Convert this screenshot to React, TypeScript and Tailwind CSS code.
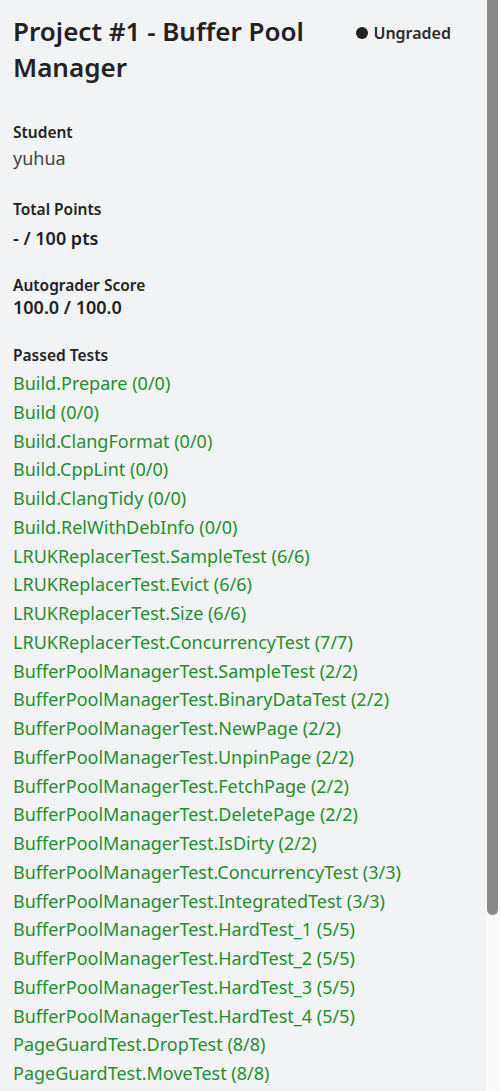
const tests = [
  'Build.Prepare (0/0)',
  'Build (0/0)',
  'Build.ClangFormat (0/0)',
  'Build.CppLint (0/0)',
  'Build.ClangTidy (0/0)',
  'Build.RelWithDebInfo (0/0)',
  'LRUKReplacerTest.SampleTest (6/6)',
  'LRUKReplacerTest.Evict (6/6)',
  'LRUKReplacerTest.Size (6/6)',
  'LRUKReplacerTest.ConcurrencyTest (7/7)',
  'BufferPoolManagerTest.SampleTest (2/2)',
  'BufferPoolManagerTest.BinaryDataTest (2/2)',
  'BufferPoolManagerTest.NewPage (2/2)',
  'BufferPoolManagerTest.UnpinPage (2/2)',
  'BufferPoolManagerTest.FetchPage (2/2)',
  'BufferPoolManagerTest.DeletePage (2/2)',
  'BufferPoolManagerTest.IsDirty (2/2)',
  'BufferPoolManagerTest.ConcurrencyTest (3/3)',
  'BufferPoolManagerTest.IntegratedTest (3/3)',
  'BufferPoolManagerTest.HardTest_1 (5/5)',
  'BufferPoolManagerTest.HardTest_2 (5/5)',
  'BufferPoolManagerTest.HardTest_3 (5/5)',
  'BufferPoolManagerTest.HardTest_4 (5/5)',
  'PageGuardTest.DropTest (8/8)',
  'PageGuardTest.MoveTest (8/8)',
];

export default function App() {
  return (
    <div
      className="flex h-[1091px] overflow-hidden bg-[#f2f3f5] text-[#222]"
      style={{ fontFamily: '"Noto Sans", "Open Sans", sans-serif' }}
    >
      <div className="w-[486px] shrink-0 px-[13px] pt-[13px]">
        <div className="flex items-start justify-between">
          <h1 className="w-[330px] text-[26px] font-semibold leading-[36px]">
            Project #1 - Buffer Pool Manager
          </h1>
          <div className="mr-[22px] mt-[9px] flex items-center gap-[5px] text-[16px] font-semibold leading-[22px] text-[#2a2a2a]">
            <span className="h-[12px] w-[12px] rounded-full bg-[#222]" />
            Ungraded
          </div>
        </div>

        <div className="mt-[36px]">
          <div className="text-[15.5px] font-semibold leading-[22px]">Student</div>
          <div className="mt-[2px] text-[18px] leading-[26px] text-[#444]">yuhua</div>
        </div>

        <div className="mt-[27px]">
          <div className="text-[15.5px] font-semibold leading-[22px]">Total Points</div>
          <div className="mt-[5px] text-[18px] font-semibold leading-[26px]">- / 100 pts</div>
        </div>

        <div className="mt-[23px]">
          <div className="text-[15.5px] font-semibold leading-[22px]">Autograder Score</div>
          <div className="text-[18px] font-semibold leading-[22px]">100.0 / 100.0</div>
        </div>

        <div className="mt-[26px]">
          <div className="text-[15.5px] font-semibold leading-[22px]">Passed Tests</div>
          <ul className="mt-[3px]">
            {tests.map((t) => (
              <li key={t} className="text-[18px] leading-[28.75px] text-[#1f8f2f]">
                {t}
              </li>
            ))}
          </ul>
        </div>
      </div>

      <div className="flex w-[14px] shrink-0 flex-col bg-[#fafafa] pl-[1px] pr-[2px]">
        <div className="h-[915px] rounded-b-full bg-[#8a8a8a]" />
      </div>
    </div>
  );
}
